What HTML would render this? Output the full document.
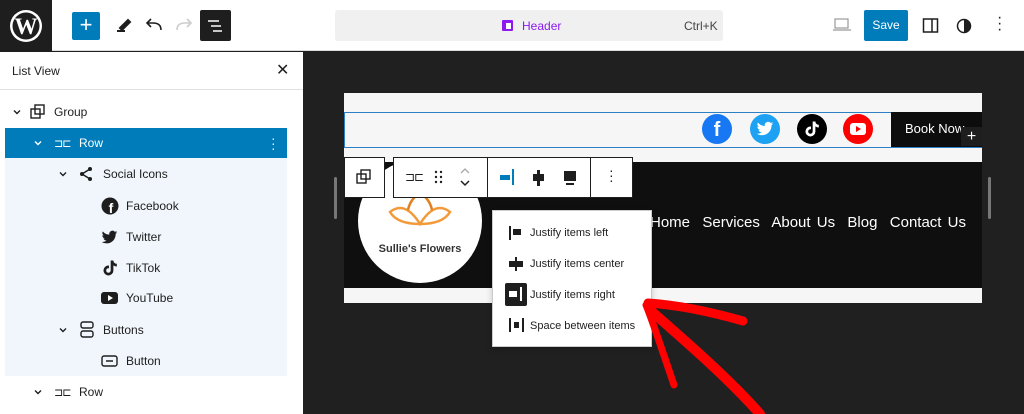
<!DOCTYPE html>
<html><head><meta charset="utf-8"><style>
*{box-sizing:border-box;margin:0;padding:0}
body{width:1024px;height:414px;overflow:hidden;background:#1e1e1e;font-family:"Liberation Sans",sans-serif;position:relative;color:#1e1e1e}
.a{position:absolute}
.top{left:0;top:0;width:1024px;height:51px;background:#fff;border-bottom:1px solid #ddd}
.panel{left:0;top:52px;width:303px;height:362px;background:#fff}
.row{position:absolute;left:5px;width:282px;height:30px;font-size:12px;display:flex;align-items:center}
.row span.t{position:absolute}
.chev{position:absolute;top:12px}
.dd{font-size:11px;color:#1e1e1e}
</style></head><body>
<svg width="0" height="0" style="position:absolute"><defs>
<symbol id="ch" viewBox="0 0 8 6"><path d="M1 1.5l3 3 3-3" fill="none" stroke="currentColor" stroke-width="1.4"/></symbol>
<symbol id="tw" viewBox="0 0 24 24"><path d="M23 4.6a9 9 0 0 1-2.6.7 4.6 4.6 0 0 0 2-2.5 9 9 0 0 1-2.9 1.1 4.5 4.5 0 0 0-7.7 4.1A12.8 12.8 0 0 1 2.5 3.3a4.5 4.5 0 0 0 1.4 6 4.5 4.5 0 0 1-2-.6v.1a4.5 4.5 0 0 0 3.6 4.4 4.5 4.5 0 0 1-2 .1 4.5 4.5 0 0 0 4.2 3.1A9 9 0 0 1 1 18.3 12.8 12.8 0 0 0 7.9 20.3c8.3 0 12.8-6.9 12.8-12.8v-.6A9 9 0 0 0 23 4.6z" fill="currentColor"/></symbol>
<symbol id="tt" viewBox="0 0 24 24"><path d="M16.5 2h-3.6v13.3a3 3 0 1 1-2.2-2.9V8.8a6.6 6.6 0 1 0 5.8 6.5V8.5a8 8 0 0 0 4.6 1.5V6.4a4.6 4.6 0 0 1-4.6-4.4z" fill="currentColor"/></symbol>
</defs></svg>
<div class="a top"></div>
<div class="a" style="left:0;top:0;width:52px;height:51px;background:#1e1e1e"></div>
<svg class="a" style="left:8px;top:8px" width="36" height="36" viewBox="0 0 36 36"><circle cx="18" cy="18" r="16" fill="#fff"/><circle cx="18" cy="18" r="13.5" fill="#1e1e1e"/><text x="18" y="26" text-anchor="middle" font-family="Liberation Serif" font-weight="bold" font-size="23" fill="#fff">W</text></svg>
<div class="a" style="left:72px;top:12px;width:28px;height:28px;background:#007cba;border-radius:2px;color:#fff;font-size:22px;line-height:26px;text-align:center">+</div>
<svg class="a" style="left:112px;top:14px" width="22" height="22"><path d="M5 17h8M8 14l8-8 2 2-8 8z" stroke="#1e1e1e" stroke-width="2" fill="#1e1e1e"/></svg>
<svg class="a" style="left:143px;top:15px" width="22" height="20"><path d="M18 15c0-5-3-7-8-7H4M8 4L4 8l4 4" stroke="#1e1e1e" stroke-width="1.6" fill="none"/></svg>
<svg class="a" style="left:173px;top:15px" width="22" height="20"><path d="M4 15c0-5 3-7 8-7h6M14 4l4 4-4 4" stroke="#ccc" stroke-width="1.6" fill="none"/></svg>
<div class="a" style="left:200px;top:10px;width:31px;height:31px;background:#1e1e1e;border-radius:2px"></div>
<svg class="a" style="left:205px;top:15px" width="22" height="22"><path d="M3 6h11M6 11h10M8 16h9" stroke="#fff" stroke-width="1.5"/></svg>
<div class="a" style="left:335px;top:10px;width:388px;height:31px;background:#f0f0f0;border-radius:3px"></div>
<div class="a" style="left:502px;top:20px;width:11px;height:11px;background:#8c1af0;border-radius:1px"></div>
<div class="a" style="left:506px;top:23px;width:5px;height:6px;background:#fff"></div>
<div class="a" style="left:522px;top:19px;font-size:12px;color:#8c1af0">Header</div>
<div class="a" style="left:684px;top:19px;font-size:12px;color:#444">Ctrl+K</div>
<svg class="a" style="left:832px;top:17px" width="20" height="16"><rect x="3" y="2" width="13" height="9" fill="none" stroke="#999" stroke-width="1.2"/><path d="M1 13h18" stroke="#999" stroke-width="1.2"/></svg>
<div class="a" style="left:864px;top:10px;width:44px;height:31px;background:#007cba;border-radius:2px;color:#fff;font-size:12px;line-height:31px;text-align:center">Save</div>
<svg class="a" style="left:922px;top:17px" width="18" height="18"><rect x="1.5" y="2" width="14" height="13" fill="none" stroke="#1e1e1e" stroke-width="1.5"/><path d="M10 2v13" stroke="#1e1e1e" stroke-width="1.5"/></svg>
<svg class="a" style="left:955px;top:17px" width="18" height="18"><circle cx="9" cy="9" r="6.5" fill="none" stroke="#1e1e1e" stroke-width="1.5"/><path d="M9 2.5a6.5 6.5 0 0 1 0 13z" fill="#1e1e1e"/></svg>
<div class="a" style="left:997px;top:15px;font-size:16px;line-height:6px;color:#1e1e1e">·<br>·<br>·</div>

<div class="a panel"></div>
<div class="a" style="left:0;top:89px;width:303px;height:1px;background:#e0e0e0"></div>
<div class="a" style="left:12px;top:64px;font-size:12px">List View</div>
<div class="a" style="left:276px;top:60px;font-size:16px">✕</div>
<div class="a" style="left:5px;top:158px;width:282px;height:218px;background:#f0f6fc"></div>
<div class="row" style="top:97px"><svg class="chev" style="left:8px" width="8" height="6"><use href="#ch"/></svg><svg class="a" style="left:25px;top:7px" width="16" height="16"><rect x="1" y="5" width="9" height="9" fill="none" stroke="#1e1e1e" stroke-width="1.4"/><rect x="5" y="1" width="9" height="9" fill="none" stroke="#1e1e1e" stroke-width="1.4"/></svg><span class="t" style="left:49px">Group</span></div>
<div class="row" style="top:128px;background:#007cba;color:#fff"><svg class="chev" style="left:29px;color:#fff" width="8" height="6"><use href="#ch"/></svg><span class="t" style="left:49px;font-size:11px;letter-spacing:-1px">⊐⊏</span><span class="t" style="left:74px">Row</span><span class="t" style="left:266px;font-size:14px;line-height:5px">·<br>·<br>·</span></div>
<div class="row" style="top:159px"><svg class="chev" style="left:54px" width="8" height="6"><use href="#ch"/></svg><svg class="a" style="left:73px;top:7px" width="16" height="16"><circle cx="4" cy="8" r="2" fill="#1e1e1e"/><circle cx="12" cy="3" r="2" fill="#1e1e1e"/><circle cx="12" cy="13" r="2" fill="#1e1e1e"/><path d="M4 8L12 3M4 8l8 5" stroke="#1e1e1e" stroke-width="1.5"/></svg><span class="t" style="left:98px">Social Icons</span></div>
<div class="row" style="top:191px"><svg class="a" style="left:96px;top:6px" width="18" height="18"><circle cx="9" cy="9" r="8.5" fill="#1e1e1e"/><text x="10" y="16" font-size="14" font-weight="bold" fill="#fff" text-anchor="middle">f</text></svg><span class="t" style="left:121px">Facebook</span></div>
<div class="row" style="top:222px"><svg class="a" style="left:96px;top:7px;color:#1e1e1e" width="17" height="17"><use href="#tw"/></svg><span class="t" style="left:121px">Twitter</span></div>
<div class="row" style="top:253px"><svg class="a" style="left:96px;top:6px;color:#1e1e1e" width="18" height="18"><use href="#tt"/></svg><span class="t" style="left:121px">TikTok</span></div>
<div class="row" style="top:283px"><div class="a" style="left:96px;top:9px;width:17px;height:12px;background:#1e1e1e;border-radius:3px"></div><div class="a" style="left:103px;top:12px;border-left:5px solid #fff;border-top:3px solid transparent;border-bottom:3px solid transparent"></div><span class="t" style="left:121px">YouTube</span></div>
<div class="row" style="top:315px"><svg class="chev" style="left:54px" width="8" height="6"><use href="#ch"/></svg><svg class="a" style="left:75px;top:6px" width="14" height="18"><rect x="1" y="1" width="12" height="6" rx="2" fill="none" stroke="#1e1e1e" stroke-width="1.4"/><rect x="1" y="10" width="12" height="6" rx="2" fill="none" stroke="#1e1e1e" stroke-width="1.4"/></svg><span class="t" style="left:98px">Buttons</span></div>
<div class="row" style="top:346px"><svg class="a" style="left:96px;top:8px" width="18" height="14"><rect x="1" y="2" width="15" height="10" rx="2" fill="none" stroke="#1e1e1e" stroke-width="1.4"/><path d="M5 7h7" stroke="#1e1e1e" stroke-width="1.5"/></svg><span class="t" style="left:121px">Button</span></div>
<div class="row" style="top:377px"><svg class="chev" style="left:29px" width="8" height="6"><use href="#ch"/></svg><span class="t" style="left:49px;font-size:11px;letter-spacing:-1px">⊐⊏</span><span class="t" style="left:74px">Row</span></div>

<!-- canvas -->
<div class="a" style="left:303px;top:52px;width:721px;height:362px;background:#202020"></div>
<div class="a" style="left:334px;top:177px;width:3px;height:42px;background:#777;border-radius:2px"></div>
<div class="a" style="left:988px;top:177px;width:3px;height:42px;background:#777;border-radius:2px"></div>
<div class="a" style="left:344px;top:93px;width:638px;height:210px;background:#f6f6f6"></div>
<div class="a" style="left:344px;top:112px;width:638px;height:36px;border:1.5px solid #2f7fc4;background:#f6f6f6"></div>
<div class="a" style="left:702px;top:114px;width:30px;height:30px;border-radius:50%;background:#1877f2;color:#fff;font-weight:bold;font-size:20px;text-align:center;line-height:32px">f</div>
<div class="a" style="left:750px;top:114px;width:30px;height:30px;border-radius:50%;background:#1da1f2"></div>
<svg class="a" style="left:756px;top:120px;color:#fff" width="18" height="18"><use href="#tw"/></svg>
<div class="a" style="left:797px;top:114px;width:30px;height:30px;border-radius:50%;background:#000"></div>
<svg class="a" style="left:803px;top:120px;color:#fff" width="18" height="18"><use href="#tt"/></svg>
<div class="a" style="left:843px;top:114px;width:30px;height:30px;border-radius:50%;background:#f00"></div>
<div class="a" style="left:850px;top:123px;width:16px;height:12px;background:#fff;border-radius:3px"></div>
<div class="a" style="left:856px;top:126px;border-left:5px solid #f00;border-top:3px solid transparent;border-bottom:3px solid transparent"></div>
<div class="a" style="left:891px;top:112px;width:91px;height:35px;background:#0d0d0d;color:#fff;font-size:13px;line-height:33px;padding-left:14px">Book Now</div>
<div class="a" style="left:961px;top:127px;width:21px;height:19px;background:#1e1e1e;color:#fff;font-size:16px;line-height:19px;text-align:center">+</div>
<div class="a" style="left:344px;top:162px;width:638px;height:126px;background:#0f0f0f"></div>
<div class="a" style="left:358px;top:159px;width:124px;height:124px;border-radius:50%;background:#fff"></div>
<svg class="a" style="left:380px;top:190px" width="80" height="40"><path d="M10 22c10-8 20-4 30 12 10-16 20-20 30-12-6 10-20 12-30 12S16 32 10 22z" fill="none" stroke="#f29a3a" stroke-width="2.5"/><path d="M28 20c2-10 8-14 12-18 4 4 10 8 12 18" fill="none" stroke="#e07f20" stroke-width="2.5"/></svg>
<div class="a" style="left:358px;top:243px;width:124px;text-align:center;font-size:11px;font-weight:bold;color:#333">Sullie's Flowers</div>
<div class="a" style="left:650px;top:214px;font-size:15px;color:#fff;word-spacing:2px">Home&nbsp; Services&nbsp; About Us&nbsp; Blog&nbsp; Contact Us</div>

<!-- toolbar -->
<div class="a" style="left:344px;top:157px;width:41px;height:41px;background:#fff;border:1px solid #1e1e1e"></div>
<svg class="a" style="left:356px;top:169px" width="16" height="16"><rect x="1" y="5" width="9" height="9" fill="none" stroke="#1e1e1e" stroke-width="1.4"/><rect x="5" y="1" width="9" height="9" fill="none" stroke="#1e1e1e" stroke-width="1.4"/></svg>
<div class="a" style="left:393px;top:157px;width:240px;height:41px;background:#fff;border:1px solid #1e1e1e"></div>
<div class="a" style="left:487px;top:158px;width:1px;height:39px;background:#1e1e1e"></div>
<div class="a" style="left:590px;top:158px;width:1px;height:39px;background:#1e1e1e"></div>
<div class="a" style="left:405px;top:170px;font-size:12px;letter-spacing:-1px">⊐⊏</div>
<svg class="a" style="left:434px;top:170px" width="10" height="16"><g fill="#1e1e1e"><circle cx="2" cy="2" r="1.2"/><circle cx="7" cy="2" r="1.2"/><circle cx="2" cy="7" r="1.2"/><circle cx="7" cy="7" r="1.2"/><circle cx="2" cy="12" r="1.2"/><circle cx="7" cy="12" r="1.2"/></g></svg>
<svg class="a" style="left:458px;top:166px" width="14" height="24"><path d="M3 7l4-4 4 4" fill="none" stroke="#aaa" stroke-width="1.3"/><path d="M3 15l4 4 4-4" fill="none" stroke="#1e1e1e" stroke-width="1.5"/></svg>
<div class="a" style="left:500px;top:175px;width:10px;height:5px;background:#007cba"></div>
<div class="a" style="left:512px;top:169px;width:2px;height:16px;background:#007cba"></div>
<div class="a" style="left:537px;top:170px;width:3px;height:16px;background:#1e1e1e"></div>
<div class="a" style="left:533px;top:174px;width:11px;height:7px;background:#1e1e1e"></div>
<div class="a" style="left:564px;top:171px;width:12px;height:10px;background:#1e1e1e"></div>
<div class="a" style="left:566px;top:183px;width:8px;height:1.5px;background:#1e1e1e"></div>
<div class="a" style="left:609px;top:168px;font-size:14px;line-height:5px">·<br>·<br>·</div>

<!-- dropdown -->
<div class="a" style="left:492px;top:210px;width:160px;height:137px;background:#fff;border:1px solid #ccc;box-shadow:0 2px 6px rgba(0,0,0,.2)"></div>
<div class="a" style="left:509px;top:226px;width:1.5px;height:14px;background:#1e1e1e"></div><div class="a" style="left:513px;top:229px;width:8px;height:6px;background:#1e1e1e"></div>
<div class="a dd" style="left:530px;top:227px">Justify items left</div>
<div class="a" style="left:515px;top:257px;width:2px;height:14px;background:#1e1e1e"></div><div class="a" style="left:509px;top:261px;width:14px;height:6px;background:#1e1e1e"></div>
<div class="a dd" style="left:530px;top:258px">Justify items center</div>
<div class="a" style="left:505px;top:283px;width:22px;height:23px;background:#1e1e1e;border-radius:2px"></div>
<div class="a" style="left:509px;top:291px;width:8px;height:6px;background:#fff"></div><div class="a" style="left:520px;top:287px;width:1.5px;height:14px;background:#fff"></div>
<div class="a dd" style="left:530px;top:289px">Justify items right</div>
<div class="a" style="left:509px;top:318px;width:1.5px;height:14px;background:#1e1e1e"></div><div class="a" style="left:514px;top:322px;width:5px;height:6px;background:#1e1e1e"></div><div class="a" style="left:522px;top:318px;width:1.5px;height:14px;background:#1e1e1e"></div>
<div class="a dd" style="left:530px;top:320px">Space between items</div>

<!-- red arrow -->
<svg class="a" style="left:0;top:0" width="1024" height="414"><g fill="none" stroke="#f00" stroke-linecap="round" stroke-linejoin="round"><path d="M648 303c30 2 60 8 95 18" stroke-width="9"/><path d="M646 305c8 20 16 45 28 80" stroke-width="7"/><path d="M650 310c40 35 80 70 110 104" stroke-width="10"/></g></svg>
</body></html>
